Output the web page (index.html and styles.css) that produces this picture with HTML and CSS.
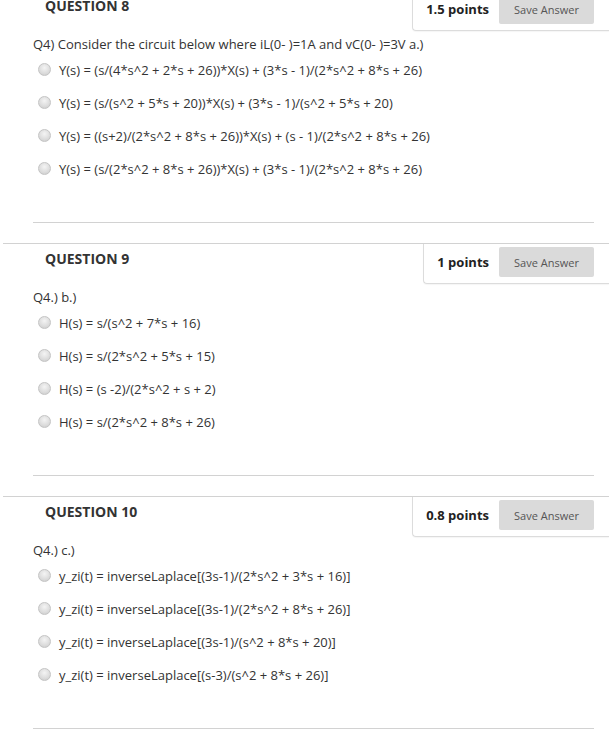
FILE: index.html
```html
<!DOCTYPE html>
<html>
<head>
<meta charset="utf-8">
<link rel="stylesheet" href="styles.css">
</head>
<body>
<div class="page">
  <section class="question">
    <div class="q-head">
      <h2 class="q-title">QUESTION 8</h2>
      <div class="points-box">
        <span class="points">1.5 points</span>
        <button class="save">Save Answer</button>
      </div>
    </div>
    <p class="q-text">Q4) Consider the circuit below where iL(0- )=1A and vC(0- )=3V a.)</p>
    <ul class="options">
      <li><span class="radio"></span>Y(s) = (s/(4*s^2 + 2*s + 26))*X(s) + (3*s - 1)/(2*s^2 + 8*s + 26)</li>
      <li><span class="radio"></span>Y(s) = (s/(s^2 + 5*s + 20))*X(s) + (3*s - 1)/(s^2 + 5*s + 20)</li>
      <li><span class="radio"></span>Y(s) = ((s+2)/(2*s^2 + 8*s + 26))*X(s) + (s - 1)/(2*s^2 + 8*s + 26)</li>
      <li><span class="radio"></span>Y(s) = (s/(2*s^2 + 8*s + 26))*X(s) + (3*s - 1)/(2*s^2 + 8*s + 26)</li>
    </ul>
    <hr class="sep">
  </section>
  <section class="question">
    <div class="q-head">
      <h2 class="q-title">QUESTION 9</h2>
      <div class="points-box">
        <span class="points">1 points</span>
        <button class="save">Save Answer</button>
      </div>
    </div>
    <p class="q-text">Q4.) b.)</p>
    <ul class="options">
      <li><span class="radio"></span>H(s) = s/(s^2 + 7*s + 16)</li>
      <li><span class="radio"></span>H(s) = s/(2*s^2 + 5*s + 15)</li>
      <li><span class="radio"></span>H(s) = (s -2)/(2*s^2 + s + 2)</li>
      <li><span class="radio"></span>H(s) = s/(2*s^2 + 8*s + 26)</li>
    </ul>
    <hr class="sep">
  </section>
  <section class="question">
    <div class="q-head">
      <h2 class="q-title">QUESTION 10</h2>
      <div class="points-box">
        <span class="points">0.8 points</span>
        <button class="save">Save Answer</button>
      </div>
    </div>
    <p class="q-text">Q4.) c.)</p>
    <ul class="options">
      <li><span class="radio"></span>y_zi(t) = inverseLaplace[(3s-1)/(2*s^2 + 3*s + 16)]</li>
      <li><span class="radio"></span>y_zi(t) = inverseLaplace[(3s-1)/(2*s^2 + 8*s + 26)]</li>
      <li><span class="radio"></span>y_zi(t) = inverseLaplace[(3s-1)/(s^2 + 8*s + 20)]</li>
      <li><span class="radio"></span>y_zi(t) = inverseLaplace[(s-3)/(s^2 + 8*s + 26)]</li>
    </ul>
    <hr class="sep">
  </section>
</div>
</body>
</html>
```
FILE: styles.css
```css
html, body {
  margin: 0;
  padding: 0;
  background: #fff;
}
body {
  font-family: "Open Sans", "Liberation Sans", sans-serif;
  color: #333;
  overflow: hidden;
}
.page {
  margin-top: -10px;
  padding-left: 3px;
}
.question {
  border-top: 1px solid #d2d2d2;
  margin-bottom: 20px;
}
.q-head {
  display: flex;
  align-items: flex-start;
  justify-content: space-between;
  height: 40px;
}
.q-title {
  margin: 0;
  padding: 6px 0 0 42px;
  font-size: 14px;
  line-height: 18px;
  font-weight: 700;
  color: #333;
}
.points-box {
  display: flex;
  align-items: center;
  gap: 10px;
  padding: 3px 15px 6px 13px;
  border-left: 1px solid #dcdcdc;
  border-bottom: 1px solid #dcdcdc;
  border-bottom-left-radius: 4px;
  box-shadow: 0 1px 1px rgba(0,0,0,0.04);
}
.points {
  font-size: 13px;
  font-weight: 700;
  color: #222;
}
.save {
  width: 95px;
  height: 30px;
  border: none;
  border-radius: 2px;
  background: #dadada;
  color: #555;
  font-family: "Open Sans", "Liberation Sans", sans-serif;
  font-size: 11px;
  padding: 0;
}
.q-text {
  margin: 4px 0 0 30px;
  font-size: 13px;
  line-height: 18px;
}
.options {
  list-style: none;
  margin: 0;
  padding: 0 0 0 35px;
}
.options li {
  display: flex;
  align-items: center;
  height: 33px;
  font-size: 13px;
}
.radio {
  width: 11px;
  height: 11px;
  border-radius: 50%;
  border: 1px solid #c4c4c4;
  background: radial-gradient(circle at 50% 35%, #f4f4f4 0%, #dcdcdc 60%, #c8c8c8 100%);
  margin-right: 8px;
  flex: none;
}
.sep {
  margin: 37px 15px 0 30px;
  border: none;
  border-top: 1px solid #d2d2d2;
  height: 0;
}
```
